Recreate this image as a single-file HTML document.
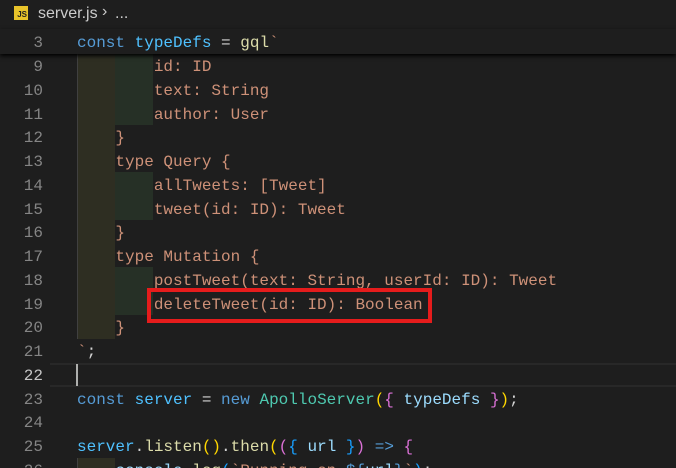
<!DOCTYPE html>
<html><head><meta charset="utf-8"><style>
html,body{margin:0;padding:0;background:#1e1e1e;width:676px;height:468px;overflow:hidden;position:relative}
.bc{position:absolute;left:0;top:0;width:676px;height:29px;background:#1e1e1e;font-family:"Liberation Sans",sans-serif;font-size:16px;color:#cccccc}
.js{position:absolute;left:14px;top:6px;width:14px;height:14px;background:#e8c32a;color:#1e1e1e;font-size:8px;font-weight:bold;line-height:17px;text-align:right;box-sizing:border-box;padding-right:1px;font-family:"Liberation Sans",sans-serif}
.ln{position:absolute;left:0;width:43px;text-align:right;font-family:"Liberation Mono",monospace;font-size:16px;color:#858585;height:23.75px;line-height:23.75px;margin-top:2px}
.code{position:absolute;left:77px;font-family:"Liberation Mono",monospace;font-size:16px;white-space:pre;height:23.75px;line-height:23.75px;color:#d4d4d4;margin-top:2px}
.g1{position:absolute;left:77px;width:38px;background:#2e2e22;border-left:1px solid #404040;box-sizing:border-box}
.g2{position:absolute;left:115px;width:38px;background:#263026}
.k{color:#569cd6}.v{color:#4fc1ff}.f{color:#dcdcaa}.s{color:#ce9178}.c{color:#4ec9b0}.p{color:#9cdcfe}
.y{color:#ffd700}.m{color:#da70d6}.b{color:#179fff}
</style></head><body>
<div class="bc"><div class="js">JS</div><span style="position:absolute;left:38px;top:5px">server.js</span><span style="position:absolute;left:102px;top:3px">&#x203A;</span><span style="position:absolute;left:115px;top:5px">...</span></div>

<!-- indent guides -->
<div class="g1" style="top:54px;height:285px"></div>
<div class="g2" style="top:54px;height:71px"></div>
<div class="g2" style="top:172px;height:48px"></div>
<div class="g2" style="top:267px;height:48px"></div>
<div class="g1" style="top:458px;height:10px"></div>

<!-- current line -->
<div style="position:absolute;left:50px;top:363px;width:626px;height:23.75px;border-top:2px solid #282828;border-bottom:2px solid #282828;box-sizing:border-box"></div>
<div style="position:absolute;left:76px;top:364px;width:2px;height:22px;background:#aeafad"></div>

<div style="position:absolute;left:0;top:29px;width:676px;height:25px;background:#1e1e1e;box-shadow:0 2px 4px #000"></div>
<div class="ln" style="top:30px">3</div>
<div class="code" style="top:30px"><span class="k">const</span> <span class="v">typeDefs</span> = <span class="f">gql</span><span class="s">`</span></div>

<div class="ln" style="top:54px">9</div><div class="code s" style="top:54px">        id: ID</div>
<div class="ln" style="top:77.75px">10</div><div class="code s" style="top:77.75px">        text: String</div>
<div class="ln" style="top:101.5px">11</div><div class="code s" style="top:101.5px">        author: User</div>
<div class="ln" style="top:125.25px">12</div><div class="code s" style="top:125.25px">    }</div>
<div class="ln" style="top:149px">13</div><div class="code s" style="top:149px">    type Query {</div>
<div class="ln" style="top:172.75px">14</div><div class="code s" style="top:172.75px">        allTweets: [Tweet]</div>
<div class="ln" style="top:196.5px">15</div><div class="code s" style="top:196.5px">        tweet(id: ID): Tweet</div>
<div class="ln" style="top:220.25px">16</div><div class="code s" style="top:220.25px">    }</div>
<div class="ln" style="top:244px">17</div><div class="code s" style="top:244px">    type Mutation {</div>
<div class="ln" style="top:267.75px">18</div><div class="code s" style="top:267.75px">        postTweet(text: String, userId: ID): Tweet</div>
<div class="ln" style="top:291.5px">19</div><div class="code s" style="top:291.5px">        deleteTweet(id: ID): Boolean</div>
<div class="ln" style="top:315.25px">20</div><div class="code s" style="top:315.25px">    }</div>
<div class="ln" style="top:339px">21</div><div class="code" style="top:339px"><span class="s">`</span>;</div>
<div class="ln" style="top:362.75px;color:#c6c6c6">22</div>
<div class="ln" style="top:386.5px">23</div><div class="code" style="top:386.5px"><span class="k">const</span> <span class="v">server</span> = <span class="k">new</span> <span class="c">ApolloServer</span><span class="y">(</span><span class="m">{</span> <span class="p">typeDefs</span> <span class="m">}</span><span class="y">)</span>;</div>
<div class="ln" style="top:410.25px">24</div>
<div class="ln" style="top:434px">25</div><div class="code" style="top:434px"><span class="v">server</span>.<span class="f">listen</span><span class="y">()</span>.<span class="f">then</span><span class="y">(</span><span class="m">(</span><span class="b">{</span> <span class="p">url</span> <span class="b">}</span><span class="m">)</span> <span class="k">=&gt;</span> <span class="m">{</span></div>
<div class="ln" style="top:457.75px">26</div><div class="code" style="top:457.75px">    <span class="p">console</span>.<span class="f">log</span><span class="b">(</span><span class="s">`Running on </span><span class="k">${</span><span class="p">url</span><span class="k">}</span><span class="s">`</span><span class="b">)</span>;</div>

<div style="position:absolute;left:147px;top:288px;width:285px;height:35px;border:4px solid #e51c1c;box-sizing:border-box"></div>
</body></html>
